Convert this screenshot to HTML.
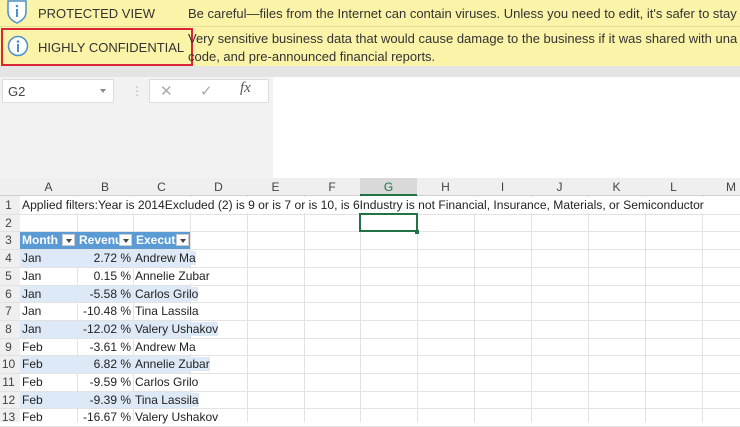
<!DOCTYPE html>
<html><head><style>
*{margin:0;padding:0;box-sizing:border-box}
body{width:740px;height:422px;overflow:hidden;background:#fff;font-family:"Liberation Sans",sans-serif;position:relative}
.a{position:absolute}
.t{font-size:12px;color:#222;white-space:nowrap}
</style></head><body>
<div class="a" style="left:0;top:0;width:740px;height:66px;background:#fbf3a7"></div>
<div class="a" style="left:0;top:26px;width:740px;height:1px;background:#e6dc95"></div>
<div class="a" style="left:0;top:66px;width:740px;height:11px;background:#e4e4e4"></div>
<svg class="a" style="left:6px;top:0" width="22" height="24" viewBox="0 0 22 24"><path d="M2 1 H20 V12 Q20 19 11 23 Q2 19 2 12 Z" fill="#fff" stroke="#4a8fcf" stroke-width="1.5"/><circle cx="11" cy="6" r="1.3" fill="#4a8fcf"/><rect x="10" y="9" width="2" height="8" fill="#4a8fcf"/></svg>
<div class="a t" style="left:38px;top:6px;font-size:13px;color:#333">PROTECTED VIEW</div>
<div class="a t" style="left:188px;top:6px;font-size:13px;color:#333">Be careful—files from the Internet can contain viruses. Unless you need to edit, it's safer to stay</div>
<div class="a" style="left:1px;top:28px;width:192px;height:38px;border:2px solid #d9253c"></div>
<svg class="a" style="left:7px;top:35px" width="22" height="22" viewBox="0 0 22 22"><circle cx="11" cy="11" r="9.5" fill="#fff" stroke="#4a8fcf" stroke-width="1.5"/><circle cx="11" cy="6.5" r="1.3" fill="#4a8fcf"/><rect x="10" y="9" width="2" height="8" fill="#4a8fcf"/></svg>
<div class="a t" style="left:38px;top:40px;font-size:13px;color:#333">HIGHLY CONFIDENTIAL</div>
<div class="a t" style="left:188px;top:31px;font-size:13px;color:#333">Very sensitive business data that would cause damage to the business if it was shared with una</div>
<div class="a t" style="left:188px;top:49px;font-size:13px;color:#333">code, and pre-announced financial reports.</div>
<div class="a" style="left:0;top:77px;width:740px;height:101px;background:#f2f2f2"></div>
<div class="a" style="left:273px;top:77px;width:467px;height:101px;background:#fff"></div>
<div class="a" style="left:2px;top:79px;width:112px;height:24px;background:#fff;border:1px solid #ddd"></div>
<div class="a t" style="left:8px;top:84px;font-size:13px;color:#444">G2</div>
<div class="a" style="left:100px;top:89px;border:3px solid transparent;border-top:4px solid #888"></div>
<div class="a" style="left:131px;top:84px;color:#bbb;font-size:12px">⋮</div>
<div class="a" style="left:149px;top:79px;width:120px;height:24px;background:#fff;border:1px solid #ddd"></div>
<div class="a" style="left:160px;top:82px;color:#aaa;font-size:15px">✕</div>
<div class="a" style="left:200px;top:82px;color:#aaa;font-size:15px">✓</div>
<div class="a" style="left:240px;top:80px;color:#555;font-size:15px;font-style:italic;font-family:'Liberation Serif',serif">fx</div>
<div class="a" style="left:0;top:178px;width:740px;height:18px;background:#efefef;border-bottom:1px solid #d0d0d0"></div>
<div class="a" style="left:360px;top:178px;width:57px;height:18px;background:#d9d9d9;border-bottom:2px solid #217346"></div>
<div id="g"></div>
<script>
var cols=[20,77,133,190,247,304,360,417,474,531,588,645,702,760],L="ABCDEFGHIJKLM",h='';
for(var i=0;i<13;i++){h+='<div class="a t" style="left:'+cols[i]+'px;top:180px;width:'+(cols[i+1]-cols[i])+'px;text-align:center;color:'+(i==6?'#217346':'#444')+'">'+L[i]+'</div>';h+='<div class="a" style="left:'+cols[i+1]+'px;top:196px;width:1px;height:226px;background:#e2e2e2"></div>';}
var top0=196,rh=17.7;
for(var r=0;r<13;r++){var y=top0+r*rh;h+='<div class="a" style="left:0;top:'+(y+rh)+'px;width:740px;height:1px;background:#e2e2e2"></div>';h+='<div class="a t" style="left:0;top:'+(y+2)+'px;width:17px;text-align:center;color:#444">'+(r+1)+'</div>';}
h+='<div class="a" style="left:0;top:196px;width:20px;height:226px;background:#efefef;z-index:-1"></div>';
var d=[["Jan","2.72 %","Andrew Ma"],["Jan","0.15 %","Annelie Zubar"],["Jan","-5.58 %","Carlos Grilo"],["Jan","-10.48 %","Tina Lassila"],["Jan","-12.02 %","Valery Ushakov"],["Feb","-3.61 %","Andrew Ma"],["Feb","6.82 %","Annelie Zubar"],["Feb","-9.59 %","Carlos Grilo"],["Feb","-9.39 %","Tina Lassila"],["Feb","-16.67 %","Valery Ushakov"]];
for(var k=0;k<d.length;k++){var y=top0+(k+3)*rh;if(k%2==0)h+='<div class="a" style="left:20px;top:'+(y+1)+'px;width:170px;height:'+(rh-1)+'px;background:#dde9f6"></div>';
h+='<div class="a t" style="left:22px;top:'+(y+2)+'px">'+d[k][0]+'</div><div class="a t" style="left:77px;top:'+(y+2)+'px;width:54px;text-align:right">'+d[k][1]+'</div><div class="a t" style="left:135px;top:'+(y+2)+'px;background:'+(k%2==0?'#dde9f6':'#fff')+'">'+d[k][2]+'</div>';}
var y3=top0+2*rh;
h+='<div class="a" style="left:20px;top:'+(y3+1)+'px;width:170px;height:'+(rh-1)+'px;background:#5b9bd5"></div>';
[["Month",22,62],["Revenu",79,119],["Executi",136,176]].forEach(function(c){h+='<div class="a t" style="left:'+c[1]+'px;top:'+(y3+2)+'px;color:#fff;font-weight:bold;width:'+(c[2]-c[1])+'px;overflow:hidden">'+c[0]+'</div><div class="a" style="left:'+c[2]+'px;top:'+(y3+3)+'px;width:13px;height:12px;background:#fff;border:1px solid #ccc"><div style="margin:4px 0 0 3px;border:3px solid transparent;border-top:4px solid #444;width:0"></div></div>';});
h+='<div class="a t" style="left:21px;top:'+(top0+1)+'px;height:16px;padding:1px 1px 0;background:#fff;font-size:12.1px">Applied filters:Year is 2014Excluded (2) is 9 or is 7 or is 10, is 6Industry is not Financial, Insurance, Materials, or Semiconductor</div>';
h+='<div class="a" style="left:359px;top:'+(top0+rh-1)+'px;width:59px;height:'+(rh+2)+'px;border:2px solid #217346"></div><div class="a" style="left:415px;top:'+(top0+2*rh-1)+'px;width:4px;height:4px;background:#217346"></div>';
document.getElementById('g').innerHTML=h;
</script>
</body></html>
